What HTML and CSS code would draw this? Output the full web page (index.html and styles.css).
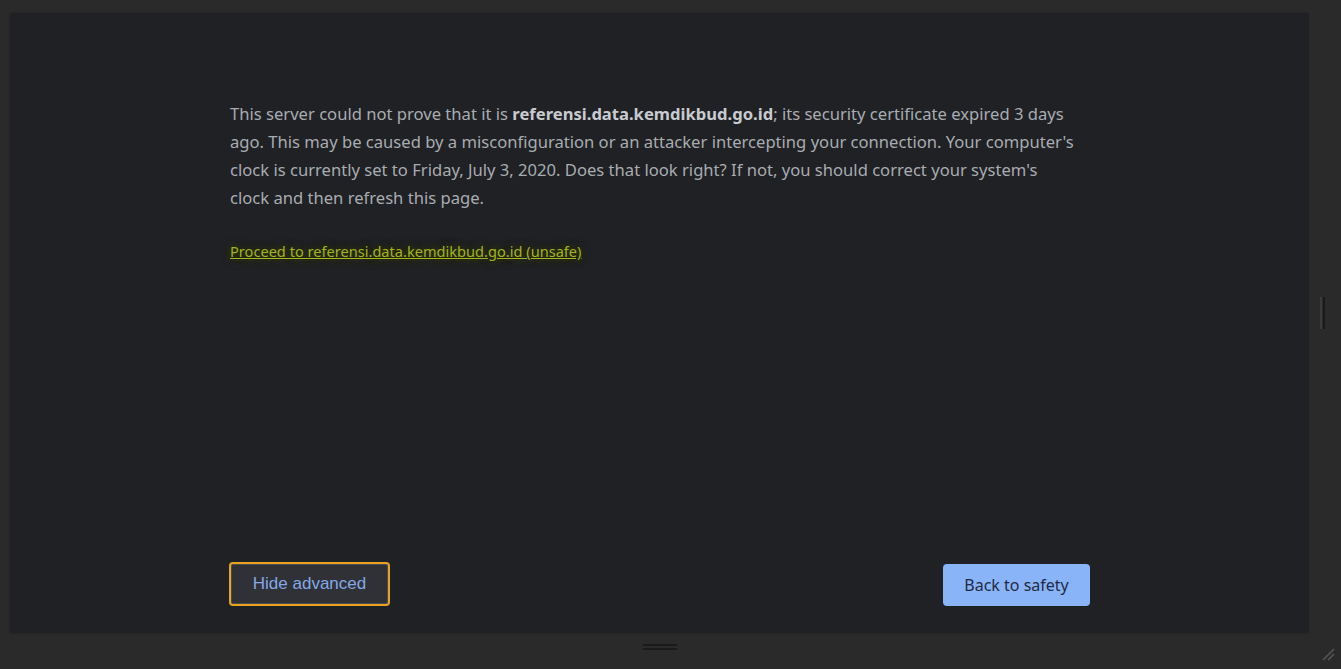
FILE: index.html
```html
<!DOCTYPE html>
<html lang="en">
<head>
    <meta charset="UTF-8">
    <meta name="viewport" content="width=device-width, initial-scale=1.0">
    <title>Privacy error</title>
    <link rel="stylesheet" href="styles.css">
</head>
<body>
    <div class="frame">
        <div class="row">
            <div class="panel">
                <div class="main-content">
                    <p class="details">This server could not prove that it is <strong>referensi.data.kemdikbud.go.id</strong>; its security certificate expired 3 days ago. This may be caused by a misconfiguration or an attacker intercepting your connection. Your computer's clock is currently set to Friday, July 3, 2020. Does that look right? If not, you should correct your system's clock and then refresh this page.</p>
                    <p class="proceed"><a href="#">Proceed to referensi.data.kemdikbud.go.id (unsafe)</a></p>
                </div>
                <div class="nav-wrapper">
                    <button class="secondary-button">Hide advanced</button>
                    <button class="primary-button">Back to safety</button>
                </div>
            </div>
            <div class="side-bar">
                <span class="grip-v"></span>
            </div>
        </div>
        <div class="bottom-bar">
            <span class="grip-h"></span>
            <span class="corner">
                <svg width="14" height="14" viewBox="0 0 14 14">
                    <path d="M2 13 L13 2 M7 13 L13 7" stroke="#555" stroke-width="1.6" fill="none"/>
                </svg>
            </span>
        </div>
    </div>
</body>
</html>
```

FILE: styles.css
```css
* {
    margin: 0;
    padding: 0;
    box-sizing: border-box;
}

body {
    background-color: #2a2a2a;
    width: 1341px;
    height: 669px;
    overflow: hidden;
    font-family: "Noto Sans", "Open Sans", sans-serif;
}

.frame {
    padding: 13px 0 0 11px;
    height: 669px;
    display: flex;
    flex-direction: column;
}

.row {
    display: flex;
    height: 620px;
}

.panel {
    width: 1298px;
    height: 620px;
    background-color: #202124;
    padding: 87px 219px 0 218px;
    display: flex;
    flex-direction: column;
    box-shadow: -1px 0 2px rgba(0,0,0,0.3);
}

.main-content {
    flex: 1;
    padding-left: 1px;
}

.details {
    font-size: 16.6px;
    line-height: 28px;
    color: #a8acb1;
    width: 847px;
}

.details strong {
    color: #c8cbcf;
    font-weight: 700;
}

.proceed {
    margin-top: 28px;
    font-size: 14.6px;
    line-height: 22px;
}

.proceed a {
    color: #a2b41c;
    text-decoration: underline;
    text-shadow: 0 0 6px #3a4000, 0 0 10px #2e3300;
}

.nav-wrapper {
    display: flex;
    justify-content: space-between;
    align-items: center;
    height: 44px;
    margin-bottom: 27px;
}

button {
    cursor: pointer;
    border-radius: 4px;
    font-size: 16px;
}

.secondary-button {
    width: 161px;
    height: 44px;
    background-color: #303136;
    color: #84a8e6;
    border: 2px solid #e8a41e;
    font-family: "Liberation Sans", Arial, sans-serif;
    font-size: 17px;
    padding-bottom: 1px;
    box-shadow: inset 0 0 0 1px #4a4b50;
}

.primary-button {
    width: 147px;
    height: 42px;
    margin-top: 2px;
    background-color: #8ab4f8;
    color: #1f2b45;
    border: none;
    font-family: "Noto Sans", "Open Sans", sans-serif;
    font-size: 16px;
}

.side-bar {
    width: 32px;
    display: flex;
    align-items: center;
    justify-content: center;
    padding-bottom: 20px;
}

.grip-v {
    width: 5px;
    height: 32px;
    border-left: 2px solid #3a3a3a;
    border-right: 2px solid #1a1a1a;
    margin-right: 6px;
}

.bottom-bar {
    height: 36px;
    display: flex;
    align-items: center;
    justify-content: center;
    margin-left: -11px;
    padding-right: 22px;
    position: relative;
}

.grip-h {
    width: 34px;
    height: 6px;
    border-top: 2px solid #1a1a1a;
    border-bottom: 2px solid #1a1a1a;
    margin-top: -8px;
}

.corner {
    position: absolute;
    right: 6px;
    bottom: 3px;
}
```
